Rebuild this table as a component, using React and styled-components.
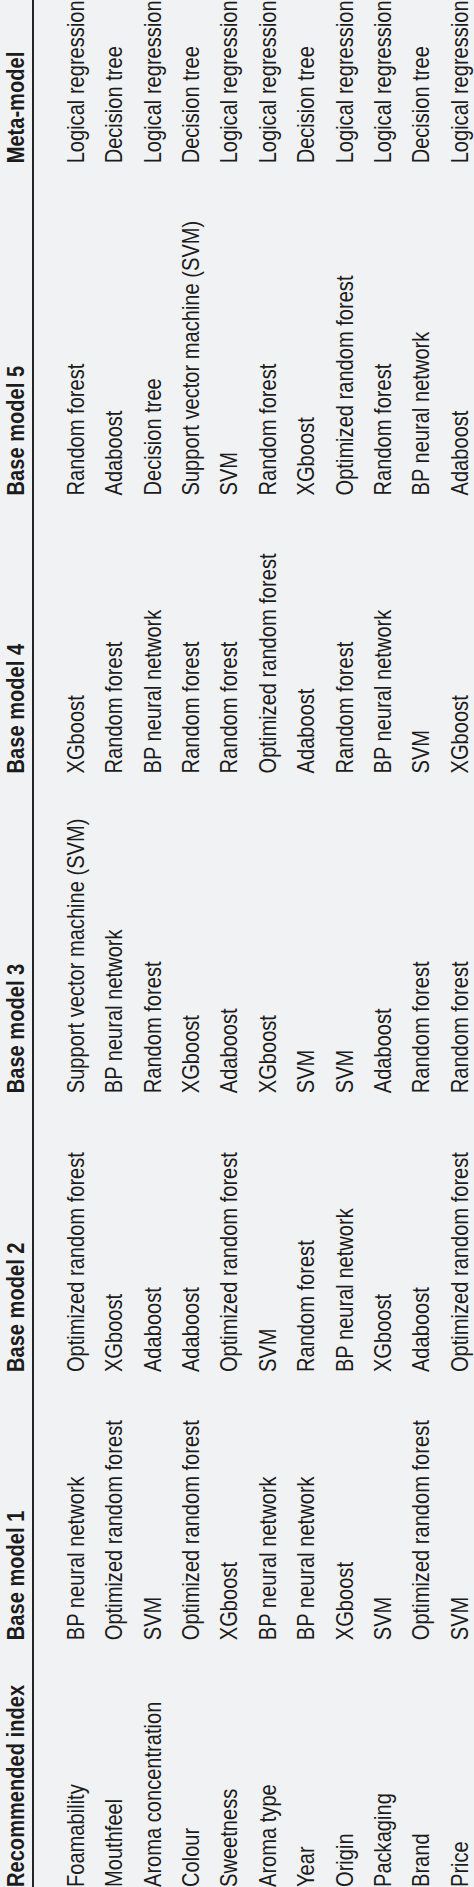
import React from "react";
import styled, { createGlobalStyle } from "styled-components";

const PAGE_W = 474;
const PAGE_H = 1887;
const K = 0.82; // horizontal condensation of the type (narrow face)
const COLS = [301, 327, 340, 390, 339, 405, 420];

const Global = createGlobalStyle`
  html, body {
    margin: 0;
    padding: 0;
    background: #f1f2f4;
  }
`;

const Page = styled.div`
  width: ${PAGE_W}px;
  height: ${PAGE_H}px;
  overflow: hidden;
  background: #f1f2f4;
`;

const Table = styled.div`
  width: ${COLS.reduce((a, b) => a + b, 0)}px;
  height: ${PAGE_W}px;
  transform-origin: 0 0;
  transform: translateY(${PAGE_H}px) rotate(-90deg) scaleX(${K});
  font-family: "Liberation Sans", Arial, sans-serif;
  font-size: 24.5px;
  color: #1c1c1c;
`;

const Row = styled.div`
  display: grid;
  grid-template-columns: ${COLS.map((c) => c + "px").join(" ")};
  white-space: nowrap;
  height: ${(p) => (p.$head ? "32px" : "38.4px")};
  line-height: ${(p) => (p.$head ? "31px" : "38.4px")};
  font-weight: ${(p) => (p.$head ? 700 : 400)};
  border-bottom: ${(p) => (p.$head ? "2px solid #262626" : "none")};
`;

const Body = styled.div`
  padding-top: 22.8px;
`;

const Cell = styled.div`
  overflow: visible;
`;

const HEAD = [
  "Recommended index",
  "Base model 1",
  "Base model 2",
  "Base model 3",
  "Base model 4",
  "Base model 5",
  "Meta-model",
];

const ROWS = [
  ["Foamability", "BP neural network", "Optimized random forest", "Support vector machine (SVM)", "XGboost", "Random forest", "Logical regression"],
  ["Mouthfeel", "Optimized random forest", "XGboost", "BP neural network", "Random forest", "Adaboost", "Decision tree"],
  ["Aroma concentration", "SVM", "Adaboost", "Random forest", "BP neural network", "Decision tree", "Logical regression"],
  ["Colour", "Optimized random forest", "Adaboost", "XGboost", "Random forest", "Support vector machine (SVM)", "Decision tree"],
  ["Sweetness", "XGboost", "Optimized random forest", "Adaboost", "Random forest", "SVM", "Logical regression"],
  ["Aroma type", "BP neural network", "SVM", "XGboost", "Optimized random forest", "Random forest", "Logical regression"],
  ["Year", "BP neural network", "Random forest", "SVM", "Adaboost", "XGboost", "Decision tree"],
  ["Origin", "XGboost", "BP neural network", "SVM", "Random forest", "Optimized random forest", "Logical regression"],
  ["Packaging", "SVM", "XGboost", "Adaboost", "BP neural network", "Random forest", "Logical regression"],
  ["Brand", "Optimized random forest", "Adaboost", "Random forest", "SVM", "BP neural network", "Decision tree"],
  ["Price", "SVM", "Optimized random forest", "Random forest", "XGboost", "Adaboost", "Logical regression"],
];

export default function App() {
  return (
    <Page>
      <Global />
      <Table>
        <Row $head>
          {HEAD.map((h) => (
            <Cell key={h}>{h}</Cell>
          ))}
        </Row>
        <Body>
          {ROWS.map((r) => (
            <Row key={r[0]}>
              {r.map((c, i) => (
                <Cell key={i}>{c}</Cell>
              ))}
            </Row>
          ))}
        </Body>
      </Table>
    </Page>
  );
}
